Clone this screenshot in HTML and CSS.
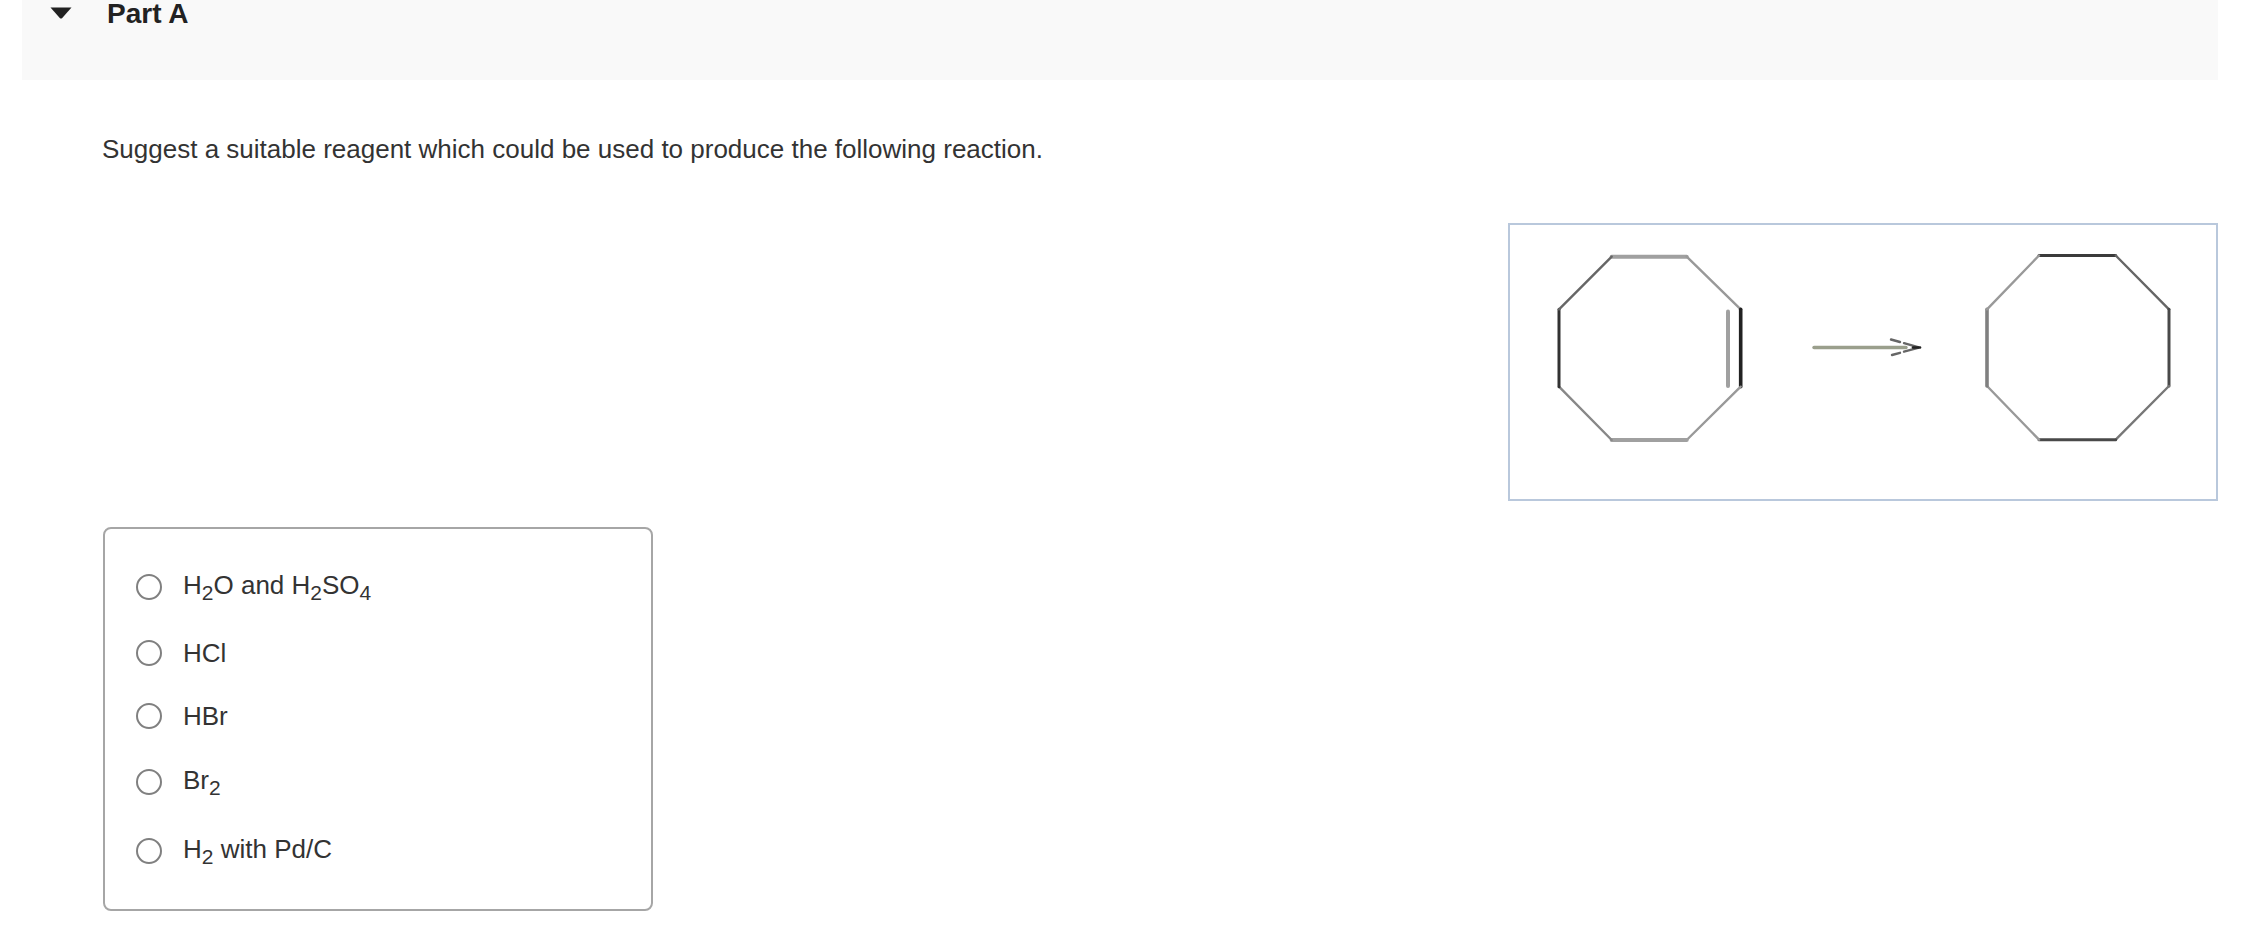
FILE: index.html
```html
<!DOCTYPE html>
<html lang="en">
<head>
<meta charset="utf-8">
<title>Part A</title>
<link rel="stylesheet" href="styles.css">
</head>
<body>
<header class="part-header">
  <svg class="caret" width="22" height="12" viewBox="0 0 22 12"><path d="M0.5 0.5H21.5L12 11.2Q11 12 10 11.2Z" fill="#222"/></svg>
  <h2 class="part-title">Part A</h2>
</header>
<main class="part-body">
  <p class="prompt">Suggest a suitable reagent which could be used to produce the following reaction.</p>
  <div class="figure-row">
    <figure class="reaction">
      <svg width="706" height="274" viewBox="1510 225 706 274">
        <defs><filter id="soft" x="-5%" y="-5%" width="110%" height="110%"><feGaussianBlur stdDeviation="0.5"/></filter></defs>
        <g fill="none" stroke-width="2.4" stroke-linecap="round" filter="url(#soft)">
          <path d="M1611.7 256.7H1686.7" stroke="#a0a0a0" stroke-width="4"/>
          <path d="M1686.7 256.7L1740.7 309.3" stroke="#999"/>
          <path d="M1740.7 309.3V386.7" stroke="#222" stroke-width="3.6"/>
          <path d="M1728 311.5V386" stroke="#a0a0a0" stroke-width="4"/>
          <path d="M1740.7 386.7L1686.7 440" stroke="#999"/>
          <path d="M1686.7 440H1611.7" stroke="#a0a0a0" stroke-width="4"/>
          <path d="M1611.7 440L1559 386.7" stroke="#888"/>
          <path d="M1559 386.7V309.3" stroke="#333" stroke-width="3"/>
          <path d="M1559 309.3L1611.7 256.7" stroke="#666"/>

          <path d="M1814 347.5H1906" stroke="#9a9f8c" stroke-width="3.4"/>
          <path d="M1891 339.5L1900 342M1904 343.2L1918 347.2" stroke="#666" stroke-width="2.4"/>
          <path d="M1892 355L1900 352.8M1904 351.6L1918 347.8" stroke="#666" stroke-width="2.4"/>
          <path d="M1913 347.5H1920" stroke="#222" stroke-width="2.6"/>

          <path d="M2039 255.5H2115.7" stroke="#3a3a3a" stroke-width="3"/>
          <path d="M2115.7 255.5L2169 309.3" stroke="#666"/>
          <path d="M2169 309.3V386" stroke="#4a4a4a" stroke-width="3"/>
          <path d="M2169 386L2115.7 439.7" stroke="#777"/>
          <path d="M2115.7 439.7H2039" stroke="#4a4a4a" stroke-width="3"/>
          <path d="M2039 439.7L1987 386" stroke="#999"/>
          <path d="M1987 386V309.3" stroke="#808080" stroke-width="3.6"/>
          <path d="M1987 309.3L2039 255.5" stroke="#999"/>
        </g>
      </svg>
    </figure>
  </div>
  <form class="choices">
    <label class="choice has-sub"><span class="radio"></span><span class="choice-text">H<sub>2</sub>O and H<sub>2</sub>SO<sub>4</sub></span></label>
    <label class="choice"><span class="radio"></span><span class="choice-text">HCl</span></label>
    <label class="choice"><span class="radio"></span><span class="choice-text">HBr</span></label>
    <label class="choice has-sub"><span class="radio"></span><span class="choice-text">Br<sub>2</sub></span></label>
    <label class="choice has-sub"><span class="radio"></span><span class="choice-text">H<sub>2</sub> with Pd/C</span></label>
  </form>
</main>
</body>
</html>
```
FILE: styles.css
```css
html, body {
  margin: 0;
  padding: 0;
  background: #fff;
}
body {
  height: 930px;
  overflow: hidden;
  font-family: "Liberation Sans", Arial, sans-serif;
  color: #333;
}
.part-header {
  display: flex;
  align-items: flex-start;
  height: 80px;
  margin: 0 42px 0 22px;
  background: #f9f9f9;
}
.caret {
  margin: 7px 0 0 28px;
}
.part-title {
  margin: 0 0 0 35px;
  font-size: 28px;
  line-height: 28px;
  font-weight: 700;
  color: #222;
}
.part-body {
  display: flex;
  flex-direction: column;
  padding: 0 42px 0 102px;
}
.prompt {
  margin: 51px 0 0;
  font-size: 26px;
  line-height: 36px;
}
.figure-row {
  display: flex;
  justify-content: flex-end;
  margin-top: 56px;
}
.reaction {
  display: flex;
  margin: 0;
  border: 2px solid #b9c8dc;
  background: #fff;
}
.choices {
  display: flex;
  flex-direction: column;
  box-sizing: border-box;
  width: 550px;
  height: 384px;
  margin: 26px 0 0 1px;
  padding: 23px 0 0 31px;
  border: 2px solid #a6a6a6;
  border-radius: 8px;
}
.choice {
  display: flex;
  align-items: center;
  gap: 21px;
  height: 63px;
  font-size: 26px;
  line-height: 40px;
}
.choice.has-sub {
  height: 69px;
}
.has-sub .choice-text {
  margin-top: -3px;
}
.radio {
  box-sizing: border-box;
  flex: none;
  width: 26px;
  height: 26px;
  border: 2px solid #808080;
  border-radius: 50%;
  background: #fff;
}
sub {
  font-size: 21px;
  line-height: 0;
  vertical-align: -6px;
}
```
